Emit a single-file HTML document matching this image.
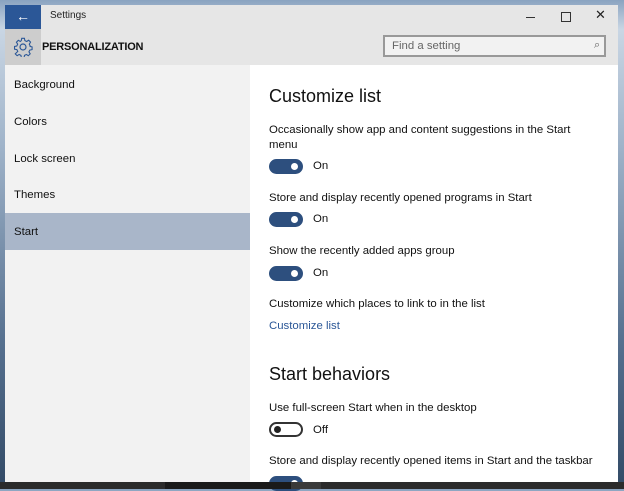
<!DOCTYPE html><html><head><style>
body{margin:0;width:624px;height:489px;position:relative;overflow:hidden;font-family:"Liberation Sans",sans-serif;background:linear-gradient(180deg,#8aa3c0 0%,#c9d6e4 6%,#9fb3c9 30%,#56708f 70%,#324a66 100%);}
.a{position:absolute}
.t{font-size:11.4px;color:#111}
.tg{position:absolute;left:269px;width:34px;height:15px;border-radius:8px;background:#2d4f7e}
.tg:after{content:"";position:absolute;right:5px;top:4px;width:7px;height:7px;border-radius:50%;background:#fff}
.on{position:absolute;left:313px;font-size:11.4px;color:#111}
</style></head><body>
<div class="a" style="left:5px;top:5px;width:613px;height:477px;background:#fff"></div>
<div class="a" style="left:5px;top:5px;width:613px;height:60px;background:#e6e6e6"></div>
<div class="a" style="left:5px;top:5px;width:36px;height:24px;background:#2b5797;color:#fff;font-size:14px;text-align:center;line-height:22px">←</div>
<div class="a" style="left:50px;top:10px;font-size:10px;color:#222">Settings</div>
<div class="a" style="left:526px;top:17px;width:9px;height:1px;background:#333"></div>
<div class="a" style="left:561px;top:12px;width:8px;height:8px;border:1px solid #333"></div>
<div class="a" style="left:595px;top:7px;font-size:13px;color:#222">✕</div>
<div class="a" style="left:5px;top:29px;width:36px;height:36px;background:#cdcdcd"></div>
<svg class="a" style="left:13px;top:37px" width="20" height="20" viewBox="0 0 20 20"><g fill="none" stroke="#2b5797" stroke-width="1.2"><circle cx="10" cy="10" r="3"/><path d="M8.5 1.5h3l.5 2.5 2 1 2.2-1.4 2.1 2.1L16.9 8l1 2-.1.5 2.2.5v3l-2.5.5-1 2 1.4 2.2-2.1 2.1-2.2-1.4-2 1-.5 2.5h-3l-.5-2.5-2-1-2.2 1.4-2.1-2.1L4.1 16l-1-2L.5 13.5v-3L3 10l1-2-1.4-2.2 2.1-2.1L6.9 5l1.1-1z" transform="scale(0.9) translate(1.2 0)"/></g></svg>
<div class="a" style="left:42px;top:41px;font-size:11px;font-weight:bold;color:#111;letter-spacing:-0.2px">PERSONALIZATION</div>
<div class="a" style="left:383px;top:35px;width:223px;height:22px;border:2px solid #999;background:#f2f2f2;box-sizing:border-box"></div>
<div class="a" style="left:392px;top:40px;font-size:11.4px;color:#666">Find a setting</div>
<div class="a" style="left:594px;top:39px;font-size:11px;color:#666">&#x2315;</div>
<div class="a" style="left:5px;top:65px;width:245px;height:417px;background:#f2f2f2"></div>
<div class="a t" style="left:14px;top:79px">Background</div>
<div class="a t" style="left:14px;top:116px">Colors</div>
<div class="a t" style="left:14px;top:153px">Lock screen</div>
<div class="a t" style="left:14px;top:189px">Themes</div>
<div class="a" style="left:5px;top:213px;width:245px;height:37px;background:#a9b6c9"></div>
<div class="a t" style="left:14px;top:226px">Start</div>
<div class="a" style="left:269px;top:86px;font-size:18px;color:#111">Customize list</div>
<div class="a t" style="left:269px;top:123px;line-height:15px;width:330px">Occasionally show app and content suggestions in the Start menu</div>
<div class="tg" style="top:159px"></div><div class="on" style="top:160px">On</div>
<div class="a t" style="left:269px;top:192px">Store and display recently opened programs in Start</div>
<div class="tg" style="top:212px"></div><div class="on" style="top:213px">On</div>
<div class="a t" style="left:269px;top:245px">Show the recently added apps group</div>
<div class="tg" style="top:266px"></div><div class="on" style="top:267px">On</div>
<div class="a t" style="left:269px;top:298px">Customize which places to link to in the list</div>
<div class="a" style="left:269px;top:320px;font-size:11.4px;color:#2b5797">Customize list</div>
<div class="a" style="left:269px;top:364px;font-size:18px;color:#111">Start behaviors</div>
<div class="a t" style="left:269px;top:402px">Use full-screen Start when in the desktop</div>
<div class="a" style="left:269px;top:422px;width:34px;height:15px;border:2px solid #333;border-radius:9px;box-sizing:border-box"></div>
<div class="a" style="left:274px;top:426px;width:7px;height:7px;border-radius:50%;background:#222"></div>
<div class="on" style="top:424px">Off</div>
<div class="a t" style="left:269px;top:455px">Store and display recently opened items in Start and the taskbar</div>
<div class="tg" style="top:476px"></div>
<div class="a" style="left:0;top:482px;width:624px;height:7px;background:#2b2b2b"></div>
<div class="a" style="left:165px;top:482px;width:156px;height:7px;background:#1a1a1a"></div>
<div class="a" style="left:291px;top:482px;width:30px;height:7px;background:#3a3a3a"></div>
</body></html>
